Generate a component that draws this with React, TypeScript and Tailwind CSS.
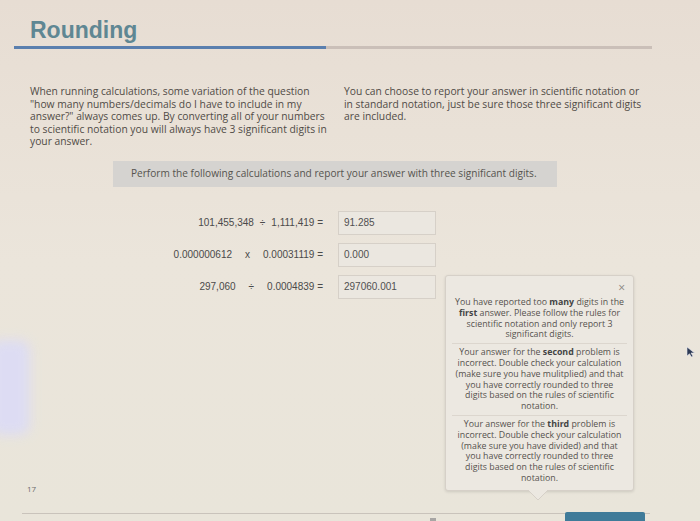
import React from "react";

const sans = { fontFamily: '"Open Sans", "Noto Sans", sans-serif' };

function Row({ a, op, b, value, wide }: { a: string; op: string; b: string; value: string; wide?: boolean }) {
  return (
    <div className="flex items-center h-[24px]">
      <div
        className={
          "w-[323px] flex justify-end items-center text-[10px] text-[#4a4a4a] " + (wide ? "gap-[13px]" : "gap-[6px]")
        }
        style={{ fontFamily: '"Liberation Sans", Arial, sans-serif' }}
      >
        <span>{a}</span>
        <span>{op}</span>
        <span>{b} =</span>
      </div>
      <div
        className="ml-[15px] w-[98px] h-[24px] border border-[#d6d0c8] bg-[#ebe7e0] flex items-center pl-[5px] text-[10px] text-[#505050]"
        style={{ fontFamily: '"Liberation Sans", Arial, sans-serif' }}
      >
        {value}
      </div>
    </div>
  );
}

export default function App() {
  return (
    <div
      className="relative w-[700px] h-[521px] overflow-hidden bg-gradient-to-b from-[#e7ddd3] via-[#ebe5db] to-[#e9e5da]"
      style={sans}
    >
      {/* glare */}
      <div className="absolute left-[-10px] top-[340px] w-[40px] h-[95px] bg-[#dcdcf6] blur-[6px] rounded-[10px] opacity-90" />

      <div className="pl-[30px] pt-[15px]">
        <h1 className="text-[23px] font-bold text-[#5f8793] leading-[30px]" style={{ fontFamily: '"Liberation Sans", Arial, sans-serif' }}>
          Rounding
        </h1>
      </div>
      <div className="flex ml-[14px] mt-[1px] h-[3px] w-[638px]">
        <div className="w-[312px] bg-[#5a7fae]" />
        <div className="flex-1 bg-[#cabfb8]" />
      </div>

      <div className="flex mt-[36px] pl-[30px] text-[10.3px] leading-[12.5px] text-[#504b46]">
        <p className="w-[314px]">
          <span className="block whitespace-nowrap">When running calculations, some variation of the question</span>
          <span className="block whitespace-nowrap">"how many numbers/decimals do I have to include in my</span>
          <span className="block whitespace-nowrap">answer?" always comes up. By converting all of your numbers</span>
          <span className="block whitespace-nowrap">to scientific notation you will always have 3 significant digits in</span>
          <span className="block whitespace-nowrap">your answer.</span>
        </p>
        <p className="w-[300px]">
          <span className="block whitespace-nowrap">You can choose to report your answer in scientific notation or</span>
          <span className="block whitespace-nowrap">in standard notation, just be sure those three significant digits</span>
          <span className="block whitespace-nowrap">are included.</span>
        </p>
      </div>

      <div className="ml-[113px] mt-[13px] w-[444px] h-[26px] bg-[#d5d3d0] flex items-center pl-[18px] text-[10.1px] text-[#56534f] whitespace-nowrap">
        Perform the following calculations and report your answer with three significant digits.
      </div>

      <div className="mt-[24px] flex flex-col gap-[8px]">
        <Row a="101,455,348" op="÷" b="1,111,419" value="91.285" />
        <Row a="0.000000612" op="x" b="0.00031119" value="0.000" wide />
        <Row a="297,060" op="÷" b="0.0004839" value="297060.001" wide />
      </div>

      <div className="absolute left-[27px] top-[483px] text-[8px] text-[#6b6b6b]">17</div>

      {/* bottom line */}
      <div className="absolute left-[22px] top-[513px] w-[628px] h-[1px] bg-[#c9c3bb]" />
      <div className="absolute left-[565px] top-[512px] w-[80px] h-[12px] bg-[#3f7b99] rounded-t-[2px]" />
      <div className="absolute left-[430px] top-[518px] w-[6px] h-[6px] bg-[#a8a6a4]" />

      {/* tooltip */}
      <div className="absolute left-[445px] top-[275px] w-[189px] h-[216px] bg-[#ece8e1] border border-[#d6d0c8] rounded-[3px] shadow-[0_1px_3px_rgba(0,0,0,0.12)] px-[6px] pt-[21px] text-center text-[8.8px] leading-[10.8px] text-[#56524e]">
        <span className="absolute right-[8px] top-[6px] text-[12px] text-[#8a8580] leading-[12px]">×</span>
        <div className="pb-[3px] border-b border-[#dcd6ce]">
          <span className="block whitespace-nowrap">You have reported too <b className="text-[#444]">many</b> digits in the</span>
          <span className="block whitespace-nowrap"><b className="text-[#444]">first</b> answer. Please follow the rules for</span>
          <span className="block whitespace-nowrap">scientific notation and only report 3</span>
          <span className="block whitespace-nowrap">significant digits.</span>
        </div>
        <div className="py-[3px] border-b border-[#dcd6ce]">
          <span className="block whitespace-nowrap">Your answer for the <b className="text-[#444]">second</b> problem is</span>
          <span className="block whitespace-nowrap">incorrect. Double check your calculation</span>
          <span className="block whitespace-nowrap">(make sure you have mulitplied) and that</span>
          <span className="block whitespace-nowrap">you have correctly rounded to three</span>
          <span className="block whitespace-nowrap">digits based on the rules of scientific</span>
          <span className="block whitespace-nowrap">notation.</span>
        </div>
        <div className="pt-[3px]">
          <span className="block whitespace-nowrap">Your answer for the <b className="text-[#444]">third</b> problem is</span>
          <span className="block whitespace-nowrap">incorrect. Double check your calculation</span>
          <span className="block whitespace-nowrap">(make sure you have divided) and that</span>
          <span className="block whitespace-nowrap">you have correctly rounded to three</span>
          <span className="block whitespace-nowrap">digits based on the rules of scientific</span>
          <span className="block whitespace-nowrap">notation.</span>
        </div>
      </div>
      {/* tooltip arrow */}
      <svg className="absolute left-[528px] top-[490px]" width="20" height="11" viewBox="0 0 20 11">
        <path d="M0 0 L10 10 L20 0" fill="#ece8e1" stroke="#d6d0c8" strokeWidth="1" />
      </svg>

      {/* cursor */}
      <svg className="absolute left-[686px] top-[346px]" width="10" height="12" viewBox="0 0 10 12">
        <path d="M1 1 L1 10 L3.5 7.8 L5.5 11 L7 10.2 L5 7 L8.5 7 Z" fill="#2d3a55" stroke="#e8e8f0" strokeWidth="0.6" />
      </svg>
    </div>
  );
}
